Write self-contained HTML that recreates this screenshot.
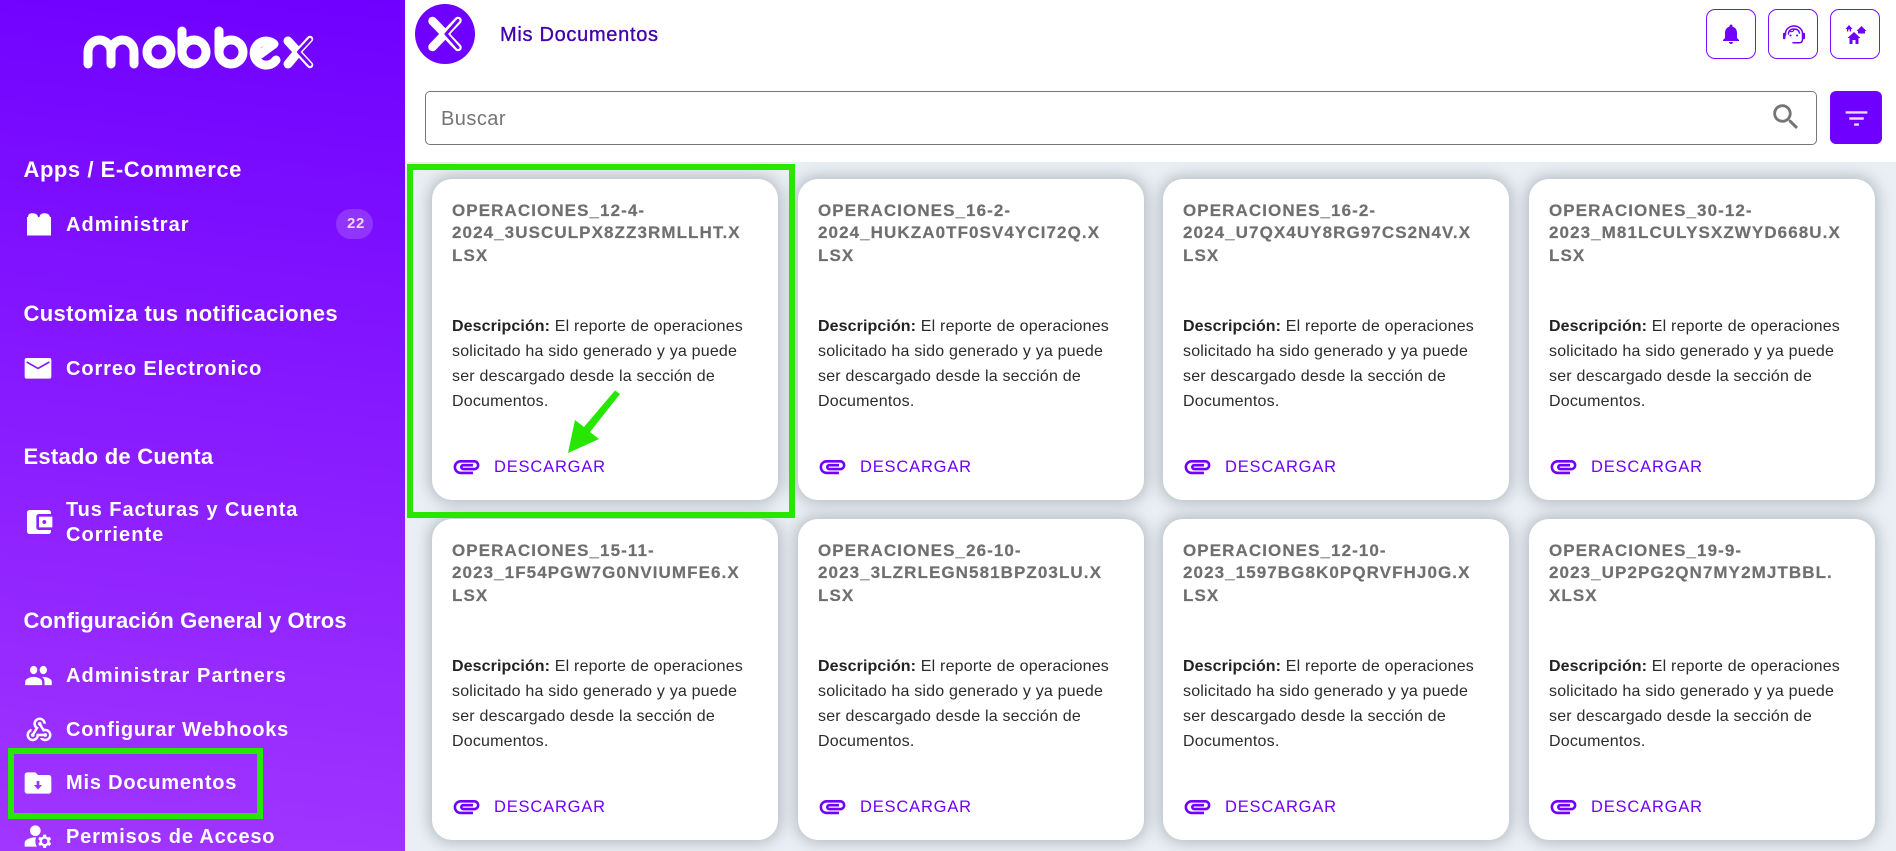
<!DOCTYPE html>
<html lang="es"><head><meta charset="utf-8"><title>Mis Documentos</title>
<style>
*{box-sizing:border-box}
html,body{margin:0;padding:0;width:1896px;height:851px;overflow:hidden;background:#fff;font-family:"Liberation Sans",sans-serif}
.a{position:absolute;white-space:nowrap}
#side{position:absolute;left:0;top:0;width:405px;height:851px;background:linear-gradient(186deg,#6f00ff 0%,#a136ff 100%);overflow:hidden}
#main{position:absolute;left:405px;top:162px;width:1491px;height:689px;background:#e9eff4}
.h{left:23.5px;color:#fff;font-size:22px;font-weight:700;line-height:30px;height:30px;margin-top:1px}
.i{left:66px;color:#fff;font-size:20px;font-weight:700;line-height:30px;height:30px;margin-top:1px}
.ic{position:absolute;fill:#fff}
.card{position:absolute;width:346px;height:321px;background:#fff;border-radius:20px;box-shadow:0 0 14px 3px rgba(90,100,110,.36)}
.t{position:absolute;left:20px;top:20.5px;font-size:17px;font-weight:700;line-height:22.5px;color:#6f6f6f;white-space:nowrap;letter-spacing:1.08px;-webkit-text-stroke:.2px #6f6f6f}
.d{position:absolute;left:20px;top:135px;font-size:16px;line-height:25px;color:#2b2b2b;white-space:nowrap;letter-spacing:.2px}
.d b{color:#222;letter-spacing:.1px}
.c{position:absolute;left:18.5px;top:272px;width:31px;height:31px;fill:#6f00ff}
.l{position:absolute;left:62px;top:276px;font-size:16.5px;line-height:24px;color:#6f00ff;letter-spacing:.82px}
.btn{position:absolute;top:9px;width:50px;height:50px;border:1.4px solid #7a10ff;border-radius:9px;background:#fff}
.g{position:absolute;border:6px solid #27e600}
</style></head><body>

<div id="side">
<svg class="a" style="left:0;top:0" width="405" height="110" viewBox="0 0 405 110" fill="none" stroke="#fff" stroke-width="9" stroke-linecap="round" stroke-linejoin="round"><title>mobbex</title>
<path d="M88 64V52a11.5 12 0 0 1 23 0V64M111 52a11.5 12 0 0 1 23 0V64"/>
<circle cx="159" cy="52" r="12"/>
<path d="M182 31V52"/><circle cx="194" cy="52" r="12"/>
<path d="M219 31V52"/><circle cx="231" cy="52" r="12"/>
<path d="M276 60A12 12 0 1 1 274 44L259 55"/>
<path d="M288 41L298 52L288 64"/>
<path d="M298 52L310 39M298 52L310 65" stroke-width="6.5"/>
<path d="M298.5 52L310 39.5M298.5 52L310 64.5" stroke="#7300ff" stroke-width="3"/>
</svg>

<div class="a h" style="top:154px;letter-spacing:.55px">Apps / E-Commerce</div>
<svg class="ic" style="left:26.500px;top:213px" width="24" height="23" viewBox="0 0 24 23"><path d="M1 4C1 1.500 2.500.3 5.500.3S10.500 1.500 11 4h1.500C13 1.500 14.500.3 17.500.3S22.500 1.500 23 4h1V22.500H0V4z"/></svg>
<div class="a i" style="top:209px;letter-spacing:1.03px">Administrar</div>
<div class="a" style="left:336px;top:209px;width:37px;height:30px;border-radius:15px;background:rgba(255,255,255,.16);color:#f4d6f6;font-size:15px;font-weight:700;line-height:30px;text-align:center;padding-left:3px;letter-spacing:.6px">22</div>

<div class="a h" style="top:298px;letter-spacing:.36px">Customiza tus notificaciones</div>
<svg class="ic" style="left:22px;top:352px" width="32" height="32" viewBox="0 0 24 24"><rect x="2" y="4.500" width="20" height="15.500" rx="1.500"/><path d="M3.500 7.500L12 12.300L20.500 7.500" fill="none" stroke="#7f18ff" stroke-width="1.200"/></svg>
<div class="a i" style="top:353px;letter-spacing:.9px">Correo Electronico</div>

<div class="a h" style="top:441px;letter-spacing:.25px">Estado de Cuenta</div>
<svg class="ic" style="left:22.800px;top:505.500px" width="32" height="32" viewBox="0 0 24 24"><path d="M21 18v1c0 1.100-.9 2-2 2H5c-1.110 0-2-.9-2-2V5c0-1.100.89-2 2-2h14c1.100 0 2 .9 2 2v1h-9c-1.110 0-2 .9-2 2v8c0 1.100.89 2 2 2h9zm-9-2h10V8H12v8zm4-2.500c-.83 0-1.500-.67-1.500-1.500s.67-1.500 1.500-1.500 1.500.67 1.500 1.500-.67 1.500-1.500 1.500z"/></svg>
<div class="a i" style="top:494px;letter-spacing:.92px">Tus Facturas y Cuenta</div>
<div class="a i" style="top:519px;letter-spacing:1.05px">Corriente</div>

<div class="a h" style="top:605px;letter-spacing:.1px">Configuración General y Otros</div>
<svg class="ic" style="left:24px;top:659px" width="29" height="33" viewBox="0 0 24 24" preserveAspectRatio="none"><path d="M16 11c1.660 0 2.990-1.340 2.990-3S17.660 5 16 5c-1.660 0-3 1.340-3 3s1.340 3 3 3zm-8 0c1.660 0 2.990-1.340 2.990-3S9.660 5 8 5C6.340 5 5 6.340 5 8s1.340 3 3 3zm0 2c-2.330 0-7 1.170-7 3.500V19h14v-2.500c0-2.330-4.670-3.500-7-3.500zm8 0c-.29 0-.62.02-.97.05 1.160.84 1.970 1.970 1.970 3.450V19h6v-2.500c0-2.330-4.670-3.500-7-3.500z"/></svg>
<div class="a i" style="top:660px;letter-spacing:1.1px">Administrar Partners</div>
<svg class="ic" style="left:23.500px;top:714.500px" width="30" height="30" viewBox="0 0 24 24"><path d="M10 15h5.880c.27-.31.67-.5 1.120-.5.83 0 1.500.67 1.500 1.500s-.67 1.500-1.500 1.500c-.44 0-.84-.19-1.120-.5H11.900c-.46 2.280-2.480 4-4.900 4-2.760 0-5-2.240-5-5 0-2.420 1.720-4.440 4-4.900v2.070C4.840 13.580 4 14.700 4 16c0 1.650 1.350 3 3 3s3-1.350 3-3v-1zm2.500-11c1.650 0 3 1.350 3 3h2c0-2.760-2.240-5-5-5s-5 2.240-5 5c0 1.430.6 2.710 1.550 3.620l-2.350 3.900c-.68.14-1.200.75-1.200 1.480 0 .83.67 1.500 1.500 1.500s1.500-.67 1.500-1.500c0-.16-.02-.31-.07-.45l3.380-5.630C10.490 9.610 9.500 8.420 9.500 7c0-1.650 1.350-3 3-3zm4.500 9c-.64 0-1.230.2-1.720.54l-3.050-5.070C11.530 8.350 11 7.740 11 7c0-.83.67-1.500 1.500-1.500S14 6.170 14 7c0 .15-.02.29-.06.43l2.190 3.650c.28-.05.57-.08.87-.08 2.760 0 5 2.240 5 5s-2.240 5-5 5c-1.850 0-3.470-1.010-4.330-2.500h2.670c.48.32 1.050.5 1.660.5 1.650 0 3-1.350 3-3s-1.350-3-3-3z"/></svg>
<div class="a i" style="top:714px;letter-spacing:.76px">Configurar Webhooks</div>
<svg class="ic" style="left:22px;top:767px" width="32" height="32" viewBox="0 0 24 24"><path d="M20 6h-8l-2-2H4c-1.100 0-1.990.9-1.990 2L2 18c0 1.100.9 2 2 2h16c1.100 0 2-.9 2-2V8c0-1.100-.9-2-2-2z"/><path d="M11 10.500h2v3h2L12 17l-3-3.500h2z" fill="#9b30ff"/></svg>
<div class="a i" style="top:767px;letter-spacing:.8px">Mis Documentos</div>
<svg class="ic" style="left:22px;top:820px" width="32" height="32" viewBox="0 0 24 24"><circle cx="10" cy="8" r="4"/><path d="M10.670 13.020C10.450 13.010 10.230 13 10 13c-2.420 0-4.680.67-6.610 1.820C2.510 15.340 2 16.320 2 17.350V20h9.260C10.470 18.870 10 17.490 10 16c0-1.070.25-2.070.67-2.980z"/><path d="M20.750 16c0-.22-.03-.42-.06-.63l1.140-1.010-1-1.730-1.450.49c-.32-.27-.68-.48-1.080-.63L18 11h-2l-.3 1.490c-.4.15-.76.36-1.080.63l-1.450-.49-1 1.730 1.140 1.010c-.03.21-.06.41-.06.63s.03.42.06.63l-1.140 1.010 1 1.730 1.450-.49c.32.27.68.48 1.080.63L16 21h2l.3-1.490c.4-.15.76-.36 1.080-.63l1.450.49 1-1.730-1.140-1.010c.03-.21.06-.41.06-.63zM17 18c-1.100 0-2-.9-2-2s.9-2 2-2 2 .9 2 2-.9 2-2 2z"/></svg>
<div class="a i" style="top:821px;letter-spacing:.8px">Permisos de Acceso</div>
</div>

<!-- header -->
<svg class="a" style="left:415px;top:4px" width="60" height="60" viewBox="0 0 60 60" fill="none" stroke-linecap="round"><circle cx="30" cy="30" r="30" fill="#6f00ff"/>
<path d="M17.500 17L30 30L17.500 43" stroke="#fff" stroke-width="8.500"/>
<path d="M30 30L43 16.500M30 30L43 43.500" stroke="#fff" stroke-width="7.500"/>
<path d="M31 30L43 16.500M31 30L43 43.500" stroke="#6f00ff" stroke-width="3"/></svg>
<div class="a" style="left:500px;top:20px;font-size:20px;line-height:30px;font-weight:400;color:#4300ad;letter-spacing:.7px;-webkit-text-stroke:.35px #4300ad">Mis Documentos</div>

<div class="btn" style="left:1706px"><svg style="position:absolute;left:11.600px;top:11.600px" width="24" height="24" viewBox="0 0 24 24" fill="#6f00ff"><path d="M12 22c1.100 0 2-.9 2-2h-4c0 1.100.89 2 2 2zm6-6v-5c0-3.070-1.640-5.640-4.500-6.320V4c0-.83-.67-1.500-1.500-1.500s-1.500.67-1.500 1.500v.68C7.630 5.360 6 7.920 6 11v5l-2 2v1h16v-1l-2-2z"/></svg></div>
<div class="btn" style="left:1768px"><svg style="position:absolute;left:14px;top:14.500px" width="22" height="19" viewBox="0 0 22 19" fill="none" stroke="#6f00ff" stroke-width="1.500" stroke-linecap="round"><path d="M2.500 10V8.500A8.500 7.500 0 0 1 19.500 8.500V14c0 2.500-1 3.800-3 3.800H10"/><path d="M5.500 9V8C6 5.500 8 4 11 4s5 1.500 5.500 4"/><path d="M1.200 9v4" stroke-width="2.500"/><path d="M20.800 9v4" stroke-width="2.500"/><path d="M7.500 10.500h.1M14 10.500h.1" stroke-width="2"/><path d="M7 6.500c2 .5 3.500-.2 4-2" stroke-width="1.100"/></svg></div>
<div class="btn" style="left:1830px"></div>
<svg class="a" style="left:1840px;top:20px" width="30" height="30" viewBox="1840 20 30 30" fill="#6f00ff"><path d="M1849 25L1845.500 29H1847V31.500H1848.300V29.500H1849.800V31.500H1851V29H1852.500z"/><path d="M1861.500 26L1856.500 31H1858V33.500H1865V31H1866.500z"/><path fill-rule="evenodd" d="M1854 32L1847.500 38H1849.500V44H1858.500V38H1860.500zM1852.500 40H1855.500V44H1852.500z"/></svg>

<div class="a" style="left:425px;top:91px;width:1392px;height:53.500px;border:1.500px solid #777;border-radius:5px;background:#fff"></div>
<div class="a" style="left:441px;top:104px;font-size:20px;line-height:30px;color:#757575;letter-spacing:.45px">Buscar</div>
<svg class="a" style="left:1769px;top:100px" width="34" height="34" viewBox="0 0 24 24" fill="#757575"><path d="M15.500 14h-.79l-.28-.27C15.410 12.590 16 11.110 16 9.500 16 5.910 13.090 3 9.500 3S3 5.910 3 9.500 5.910 16 9.500 16c1.610 0 3.090-.59 4.230-1.570l.27.28v.79l5 4.990L20.490 19l-4.990-5zm-6 0C7.010 14 5 11.990 5 9.500S7.010 5 9.500 5 14 7.010 14 9.500 11.990 14 9.500 14z"/></svg>
<div class="a" style="left:1830px;top:91px;width:52px;height:53px;border-radius:6px;background:#6f00ff"></div>
<svg class="a" style="left:1842px;top:104px" width="29" height="29" viewBox="0 0 24 24" fill="#f0d8ff"><path d="M10 18h4v-2h-4v2zM3 6v2h18V6H3zm3 7h12v-2H6v2z"/></svg>

<div id="main"></div>

<!-- cards -->
<div class="card" style="left:432px;top:179px"><div class="t">OPERACIONES_12-4-<br>2024_3USCULPX8ZZ3RMLLHT.X<br>LSX</div><div class="d"><b>Descripción:</b> El reporte de operaciones<br>solicitado ha sido generado y ya puede<br>ser descargado desde la sección de<br>Documentos.</div><svg class="c" viewBox="0 0 24 24"><path d="M2 12.500C2 9.460 4.460 7 7.500 7H18c2.210 0 4 1.790 4 4s-1.790 4-4 4H9.500C8.120 15 7 13.880 7 12.500S8.120 10 9.500 10H17v2H9.410c-.55 0-.55 1 0 1H18c1.100 0 2-.9 2-2s-.9-2-2-2H7.500C5.570 9 4 10.570 4 12.500S5.570 16 7.500 16H17v2H7.500C4.460 18 2 15.540 2 12.500z"/></svg><div class="l">DESCARGAR</div></div>
<div class="card" style="left:798px;top:179px"><div class="t">OPERACIONES_16-2-<br>2024_HUKZA0TF0SV4YCI72Q.X<br>LSX</div><div class="d"><b>Descripción:</b> El reporte de operaciones<br>solicitado ha sido generado y ya puede<br>ser descargado desde la sección de<br>Documentos.</div><svg class="c" viewBox="0 0 24 24"><path d="M2 12.500C2 9.460 4.460 7 7.500 7H18c2.210 0 4 1.790 4 4s-1.790 4-4 4H9.500C8.120 15 7 13.880 7 12.500S8.120 10 9.500 10H17v2H9.410c-.55 0-.55 1 0 1H18c1.100 0 2-.9 2-2s-.9-2-2-2H7.500C5.570 9 4 10.570 4 12.500S5.570 16 7.500 16H17v2H7.500C4.460 18 2 15.540 2 12.500z"/></svg><div class="l">DESCARGAR</div></div>
<div class="card" style="left:1163px;top:179px"><div class="t">OPERACIONES_16-2-<br>2024_U7QX4UY8RG97CS2N4V.X<br>LSX</div><div class="d"><b>Descripción:</b> El reporte de operaciones<br>solicitado ha sido generado y ya puede<br>ser descargado desde la sección de<br>Documentos.</div><svg class="c" viewBox="0 0 24 24"><path d="M2 12.500C2 9.460 4.460 7 7.500 7H18c2.210 0 4 1.790 4 4s-1.790 4-4 4H9.500C8.120 15 7 13.880 7 12.500S8.120 10 9.500 10H17v2H9.410c-.55 0-.55 1 0 1H18c1.100 0 2-.9 2-2s-.9-2-2-2H7.500C5.570 9 4 10.570 4 12.500S5.570 16 7.500 16H17v2H7.500C4.460 18 2 15.540 2 12.500z"/></svg><div class="l">DESCARGAR</div></div>
<div class="card" style="left:1529px;top:179px"><div class="t">OPERACIONES_30-12-<br>2023_M81LCULYSXZWYD668U.X<br>LSX</div><div class="d"><b>Descripción:</b> El reporte de operaciones<br>solicitado ha sido generado y ya puede<br>ser descargado desde la sección de<br>Documentos.</div><svg class="c" viewBox="0 0 24 24"><path d="M2 12.500C2 9.460 4.460 7 7.500 7H18c2.210 0 4 1.790 4 4s-1.790 4-4 4H9.500C8.120 15 7 13.880 7 12.500S8.120 10 9.500 10H17v2H9.410c-.55 0-.55 1 0 1H18c1.100 0 2-.9 2-2s-.9-2-2-2H7.500C5.570 9 4 10.570 4 12.500S5.570 16 7.500 16H17v2H7.500C4.460 18 2 15.540 2 12.500z"/></svg><div class="l">DESCARGAR</div></div>
<div class="card" style="left:432px;top:519px"><div class="t">OPERACIONES_15-11-<br>2023_1F54PGW7G0NVIUMFE6.X<br>LSX</div><div class="d"><b>Descripción:</b> El reporte de operaciones<br>solicitado ha sido generado y ya puede<br>ser descargado desde la sección de<br>Documentos.</div><svg class="c" viewBox="0 0 24 24"><path d="M2 12.500C2 9.460 4.460 7 7.500 7H18c2.210 0 4 1.790 4 4s-1.790 4-4 4H9.500C8.120 15 7 13.880 7 12.500S8.120 10 9.500 10H17v2H9.410c-.55 0-.55 1 0 1H18c1.100 0 2-.9 2-2s-.9-2-2-2H7.500C5.570 9 4 10.570 4 12.500S5.570 16 7.500 16H17v2H7.500C4.460 18 2 15.540 2 12.500z"/></svg><div class="l">DESCARGAR</div></div>
<div class="card" style="left:798px;top:519px"><div class="t">OPERACIONES_26-10-<br>2023_3LZRLEGN581BPZ03LU.X<br>LSX</div><div class="d"><b>Descripción:</b> El reporte de operaciones<br>solicitado ha sido generado y ya puede<br>ser descargado desde la sección de<br>Documentos.</div><svg class="c" viewBox="0 0 24 24"><path d="M2 12.500C2 9.460 4.460 7 7.500 7H18c2.210 0 4 1.790 4 4s-1.790 4-4 4H9.500C8.120 15 7 13.880 7 12.500S8.120 10 9.500 10H17v2H9.410c-.55 0-.55 1 0 1H18c1.100 0 2-.9 2-2s-.9-2-2-2H7.500C5.570 9 4 10.570 4 12.500S5.570 16 7.500 16H17v2H7.500C4.460 18 2 15.540 2 12.500z"/></svg><div class="l">DESCARGAR</div></div>
<div class="card" style="left:1163px;top:519px"><div class="t">OPERACIONES_12-10-<br>2023_1597BG8K0PQRVFHJ0G.X<br>LSX</div><div class="d"><b>Descripción:</b> El reporte de operaciones<br>solicitado ha sido generado y ya puede<br>ser descargado desde la sección de<br>Documentos.</div><svg class="c" viewBox="0 0 24 24"><path d="M2 12.500C2 9.460 4.460 7 7.500 7H18c2.210 0 4 1.790 4 4s-1.790 4-4 4H9.500C8.120 15 7 13.880 7 12.500S8.120 10 9.500 10H17v2H9.410c-.55 0-.55 1 0 1H18c1.100 0 2-.9 2-2s-.9-2-2-2H7.500C5.570 9 4 10.570 4 12.500S5.570 16 7.500 16H17v2H7.500C4.460 18 2 15.540 2 12.500z"/></svg><div class="l">DESCARGAR</div></div>
<div class="card" style="left:1529px;top:519px"><div class="t">OPERACIONES_19-9-<br>2023_UP2PG2QN7MY2MJTBBL.<br>XLSX</div><div class="d"><b>Descripción:</b> El reporte de operaciones<br>solicitado ha sido generado y ya puede<br>ser descargado desde la sección de<br>Documentos.</div><svg class="c" viewBox="0 0 24 24"><path d="M2 12.500C2 9.460 4.460 7 7.500 7H18c2.210 0 4 1.790 4 4s-1.790 4-4 4H9.500C8.120 15 7 13.880 7 12.500S8.120 10 9.500 10H17v2H9.410c-.55 0-.55 1 0 1H18c1.100 0 2-.9 2-2s-.9-2-2-2H7.500C5.570 9 4 10.570 4 12.500S5.570 16 7.500 16H17v2H7.500C4.460 18 2 15.540 2 12.500z"/></svg><div class="l">DESCARGAR</div></div>

<!-- annotations -->
<div class="g" style="left:407px;top:164px;width:388px;height:354px"></div>
<div class="g" style="left:8px;top:748px;width:255px;height:71px"></div>
<svg class="a" style="left:555px;top:385px" width="75" height="75" viewBox="555 385 75 75" fill="#27e600"><path d="M615 390.500L620 394L590 432L599 439L568 453L575 420L584 427z"/></svg>
</body></html>
